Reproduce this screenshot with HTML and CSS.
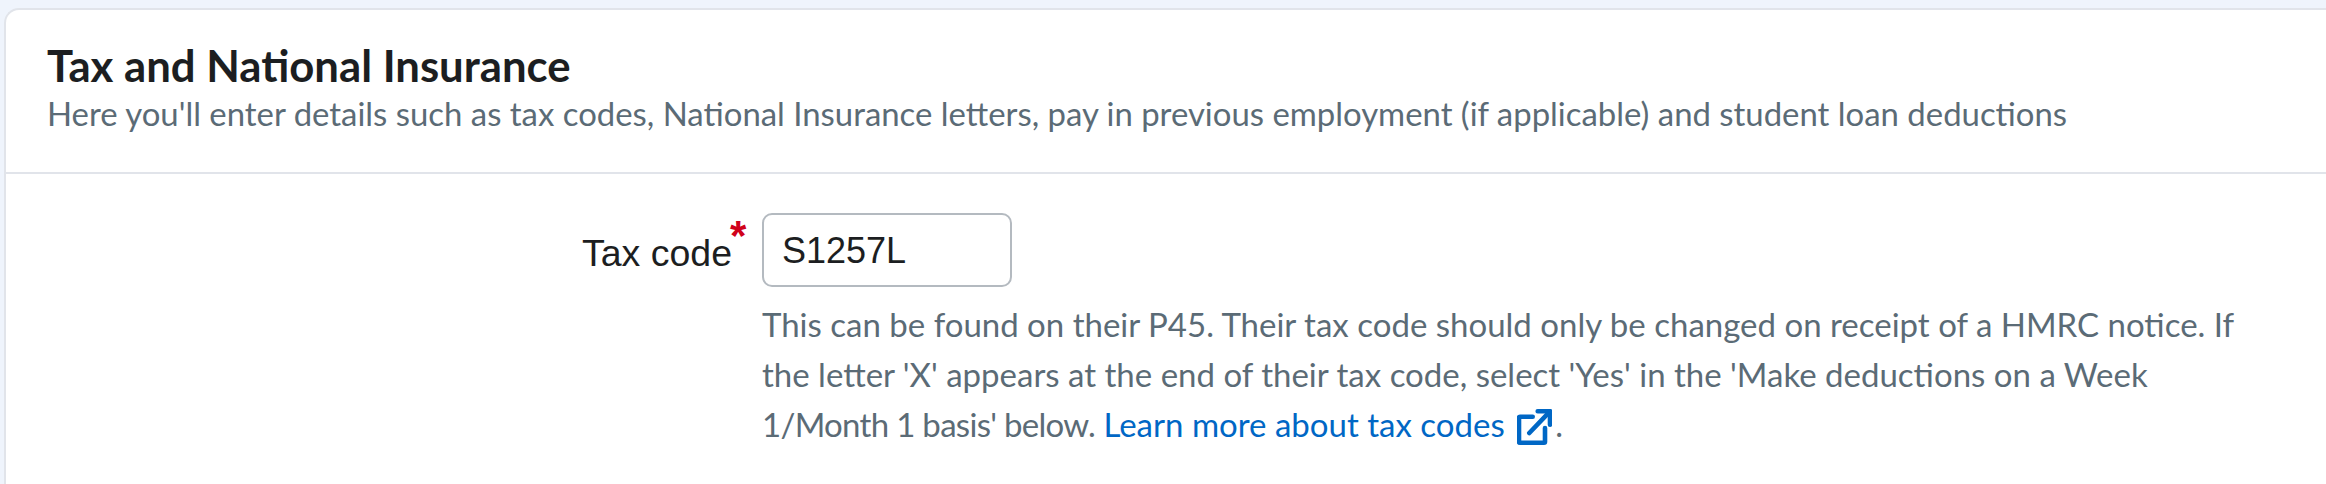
FILE: index.html
```html
<!DOCTYPE html>
<html>
<head>
  <title>Tax and National Insurance</title>
  <link rel="stylesheet" href="styles.css">
</head>
<body>
  <div class="card">
    <div class="card-header">
      <h2>Tax and National Insurance</h2>
      <p>Here you'll enter details such as tax codes, National Insurance letters, pay in previous employment (if applicable) and student loan deductions</p>
    </div>
    <div class="card-body">
      <label class="field-label" for="tax_code"><span class="label-text">Tax code<span class="required">*</span></span></label>
      <div class="field">
        <input type="text" id="tax_code" class="text-input" value="S1257L">
        <p class="hint">This can be found on their P45. Their tax code should only be changed on receipt of a HMRC notice. If the letter 'X' appears at the end of their tax code, select 'Yes' in the 'Make deductions on a Week <span class="tight">1/Month&nbsp;1&nbsp;basis' below.</span> <a href="#">Learn more about tax codes <svg class="ext-icon" viewBox="0 0 35 36" fill="none" stroke="currentColor" stroke-width="4.6" stroke-linecap="round" stroke-linejoin="round"><path d="M15.7 7.7H3a1 1 0 0 0-1 1v24a1 1 0 0 0 1 1h24a1 1 0 0 0 1-1V19"/><path d="M20.7 2.3H33v13.4"/><path d="M33 2.3 12.3 24"/></svg></a>.</p>
      </div>
    </div>
  </div>
</body>
</html>
```
FILE: styles.css
```css
html, body {
  margin: 0;
  height: 100%;
}

body {
  background-color: #eff4fc;
  padding: 8px 0 0 4px;
  box-sizing: border-box;
  overflow: hidden;
  font-family: "Lato", sans-serif;
}

.card {
  background-color: #fff;
  border: 2px solid #e1e4ea;
  border-right: 0;
  border-bottom: 0;
  border-top-left-radius: 15px;
  height: 100%;
}

.card-header {
  height: 164px;
  box-sizing: border-box;
  padding: 30px 0 0 41px;
  border-bottom: 2px solid #e1e4ea;
}

.card-header h2 {
  margin: 0 0 2px;
  font-size: 43.7px;
  line-height: 50px;
  font-weight: 700;
  color: #1c1e21;
}

.card-header p {
  margin: 0;
  font-size: 32.9px;
  line-height: 44px;
  color: #5b6b76;
}

.card-body {
  display: flex;
  padding-top: 39px;
}

.field-label {
  display: flex;
  justify-content: flex-end;
  width: 756px;
  padding-top: 18px;
  padding-right: 30px;
  box-sizing: border-box;
  font-family: "Liberation Sans", sans-serif;
  font-size: 37.5px;
  line-height: 44px;
  color: #1c1e21;
}

.label-text {
  position: relative;
}

.required {
  position: absolute;
  left: 100%;
  top: -17px;
  margin-left: -2px;
  color: #d0021b;
  font-size: 42px;
  font-weight: 700;
  line-height: 44px;
}

.field {
  width: 1500px;
}

.text-input {
  display: block;
  width: 250px;
  height: 74px;
  box-sizing: border-box;
  padding: 2px 18px 0;
  border: 2px solid #b4bac0;
  border-radius: 10px;
  font-family: "Liberation Sans", sans-serif;
  font-size: 36px;
  color: #1c1e21;
}

.hint {
  margin: 12px 0 0;
  font-size: 33px;
  line-height: 50px;
  color: #5b6b76;
}

.tight {
  letter-spacing: -0.7px;
}

.hint a {
  color: #0067c5;
  text-decoration: none;
}

.ext-icon {
  width: 35px;
  height: 36px;
  margin-left: 4px;
  margin-right: 3px;
  vertical-align: -8px;
}
```
